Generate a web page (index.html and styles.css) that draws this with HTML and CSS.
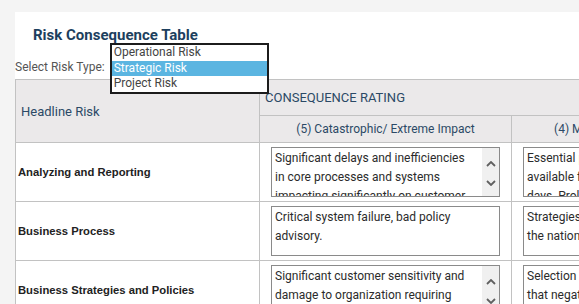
FILE: index.html
```html
<!DOCTYPE html>
<html lang="en">
<head>
  <meta charset="UTF-8" />
  <title>Risk Consequence Table</title>
  <link rel="stylesheet" href="styles.css">
</head>
<body>
  <div class="panel">
    <h2 class="title">Risk Consequence Table</h2>

    <div class="filter">
      <span class="filter-label">Select Risk Type:</span>
      <div class="picker">
        <ul class="picker-list">
          <li>Operational Risk</li>
          <li class="is-active">Strategic Risk</li>
          <li>Project Risk</li>
        </ul>
      </div>
    </div>

    <table class="risk-table">
      <colgroup>
        <col class="col-name">
        <col class="col-rating">
        <col class="col-rating">
      </colgroup>
      <thead>
        <tr>
          <th class="head head-first" rowspan="2">Headline Risk</th>
          <th class="head head-group" colspan="2">CONSEQUENCE RATING</th>
        </tr>
        <tr>
          <th class="head head-rating">(5) Catastrophic/ Extreme Impact</th>
          <th class="head head-rating">(4) Major/ Considerable Impact</th>
        </tr>
      </thead>
      <tbody>
        <tr>
          <td class="row-name">Analyzing and Reporting</td>
          <td class="cell">
            <div class="note">
              <div class="note-text">Significant delays and inefficiencies in core processes and systems impacting significantly on customer service delivery.</div>
              <div class="note-bar">
                <svg width="10" height="6" viewBox="0 0 10 6"><path d="M1 5 L5 1 L9 5" /></svg>
                <svg width="10" height="6" viewBox="0 0 10 6"><path d="M1 1 L5 5 L9 1" /></svg>
              </div>
            </div>
          </td>
          <td class="cell">
            <div class="note">
              <div class="note-text">Essential processes and systems not available for a number of business days. Prolonged impact on reporting.</div>
              <div class="note-bar">
                <svg width="10" height="6" viewBox="0 0 10 6"><path d="M1 5 L5 1 L9 5" /></svg>
                <svg width="10" height="6" viewBox="0 0 10 6"><path d="M1 1 L5 5 L9 1" /></svg>
              </div>
            </div>
          </td>
        </tr>
        <tr>
          <td class="row-name">Business Process</td>
          <td class="cell">
            <div class="note">
              <div class="note-text">Critical system failure, bad policy advisory.</div>
            </div>
          </td>
          <td class="cell">
            <div class="note">
              <div class="note-text">Strategies affecting the core mandate of<br>the nation.</div>
            </div>
          </td>
        </tr>
        <tr>
          <td class="row-name">Business Strategies and Policies</td>
          <td class="cell">
            <div class="note">
              <div class="note-text">Significant customer sensitivity and damage to organization requiring major remedial action.</div>
              <div class="note-bar">
                <svg width="10" height="6" viewBox="0 0 10 6"><path d="M1 5 L5 1 L9 5" /></svg>
                <svg width="10" height="6" viewBox="0 0 10 6"><path d="M1 1 L5 5 L9 1" /></svg>
              </div>
            </div>
          </td>
          <td class="cell">
            <div class="note">
              <div class="note-text">Selection of inappropriate strategies that negatively affect core business over a long period.</div>
              <div class="note-bar">
                <svg width="10" height="6" viewBox="0 0 10 6"><path d="M1 5 L5 1 L9 5" /></svg>
                <svg width="10" height="6" viewBox="0 0 10 6"><path d="M1 1 L5 5 L9 1" /></svg>
              </div>
            </div>
          </td>
        </tr>
      </tbody>
    </table>
  </div>
</body>
</html>
```

FILE: styles.css
```css
body {
  margin: 0;
  overflow: hidden;
  background-color: #f4f4f4;
  font-family: Roboto, "Liberation Sans", sans-serif;
}

.panel {
  margin: 12px 0 0 15px;
  height: 292px;
  background-color: #ffffff;
}

.title {
  margin: 0;
  padding: 14px 0 0 18px;
  font-size: 15px;
  line-height: 18px;
  font-weight: 700;
  color: #1d3f5e;
}

.filter {
  display: flex;
  align-items: center;
  gap: 5px;
  margin-top: 16px;
  height: 15px;
  font-size: 12px;
  line-height: 15px;
  color: #555555;
}

.picker {
  position: relative;
  width: 159px;
  height: 15px;
}

.picker-list {
  position: absolute;
  top: -17px;
  left: 0;
  z-index: 10;
  width: 155px;
  margin: 0;
  padding: 0;
  list-style: none;
  border: 2px solid #1c1c1c;
  background-color: #ffffff;
}

.picker-list li {
  height: 15.67px;
  line-height: 15.67px;
  padding-left: 2px;
  color: #444444;
}

.picker-list .is-active {
  background-color: #5bb5e1;
  color: #ffffff;
}

/* table */

.risk-table {
  margin-top: 4px;
  border-collapse: collapse;
  table-layout: fixed;
  width: 748px;
}

.col-name {
  width: 244px;
}

.col-rating {
  width: 252px;
}

.risk-table th,
.risk-table td {
  border: 1px solid #c2c2c2;
  padding: 0;
}

.risk-table .head {
  background-color: #ebe9ea;
  color: #2b4966;
  font-weight: 400;
}

.risk-table .head-first {
  text-align: left;
  padding-left: 5px;
  font-size: 13px;
}

.risk-table .head-group {
  height: 35px;
  text-align: left;
  padding-left: 5px;
  font-size: 13px;
}

.risk-table .head-rating {
  height: 26px;
  text-align: center;
  font-size: 12px;
}

.risk-table .row-name {
  padding-left: 2px;
  font-family: "Liberation Sans", Arial, sans-serif;
  font-size: 11.25px;
  font-weight: 700;
  color: #222222;
}

.risk-table .cell {
  height: 50px;
  padding: 4px 11px 4px 11px;
  vertical-align: top;
}

.note {
  display: flex;
  height: 50px;
  box-sizing: border-box;
  border: 1px solid #8a8a8a;
  font-size: 12px;
  line-height: 19px;
  color: #2b2b2b;
}

.note-text {
  flex: 1;
  overflow: hidden;
  padding: 1px 8px 1px 3px;
}

.note-bar {
  display: flex;
  flex-direction: column;
  align-items: center;
  width: 17px;
  background-color: #f0f0f0;
}

.note-bar svg {
  margin-top: 13px;
}

.note-bar path {
  fill: none;
  stroke: #606060;
  stroke-width: 1.8;
}
```
